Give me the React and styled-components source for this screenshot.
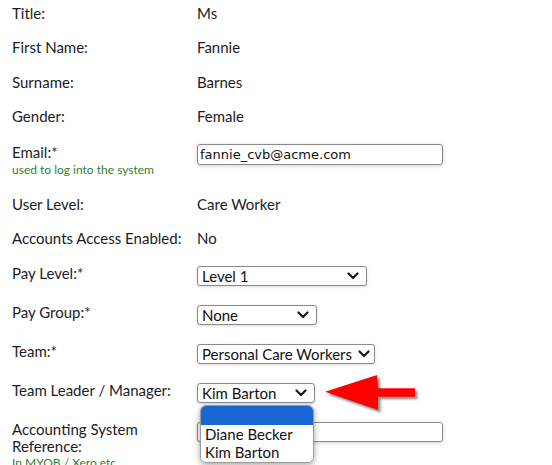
import React from "react";
import styled, { createGlobalStyle } from "styled-components";

const Global = createGlobalStyle`
  html, body { margin: 0; padding: 0; background: #fff; }
  body { font-family: Lato, "Open Sans", sans-serif; color: #1c1c24; }
`;

const Form = styled.div`
  display: flex;
  flex-direction: column;
  padding: 4.5px 0 0 12px;
  width: 540px;
  height: 460.5px;
  overflow: hidden;
`;

const Row = styled.div`
  display: grid;
  grid-template-columns: 185px 1fr;
  align-items: start;
  height: ${(p) => p.$h}px;
  flex-shrink: 0;
`;

const Label = styled.div`
  font-size: 15px;
  line-height: 17px;
`;

const Hint = styled.div`
  font-size: 12px;
  line-height: 14px;
  color: #2f7f2f;
  margin-top: ${(p) => p.$mt || 0}px;
`;

const Value = styled.div`
  font-size: 15px;
  line-height: 17px;
`;

const TextInput = styled.div`
  box-sizing: border-box;
  width: 246px;
  height: ${(p) => p.$h || 21}px;
  margin-top: ${(p) => p.$mt || 0}px;
  border: 1px solid #8a8a8a;
  border-radius: 3px;
  background: #fff;
  box-shadow: 0 1px 4px rgba(0, 0, 0, 0.18);
  font-family: "DejaVu Sans", Verdana, sans-serif;
  font-size: 13px;
  line-height: 19px;
  padding-left: 2px;
  color: #111;
`;

const SelectWrap = styled.div`
  position: relative;
  width: ${(p) => p.$w}px;
  margin-top: 1px;
`;

const SelectBox = styled.div`
  box-sizing: border-box;
  width: 100%;
  height: 20px;
  border: 1px solid #8a8a8a;
  border-radius: 3px;
  background: #fff;
  box-shadow: 0 1px 3px rgba(0, 0, 0, 0.15);
  display: flex;
  align-items: center;
  justify-content: space-between;
  padding: 0 7px 0 4px;
  font-size: 15px;
  line-height: 18px;
  color: #111;
  white-space: nowrap;
`;

const Chevron = styled.svg`
  width: 12px;
  height: 8px;
  flex-shrink: 0;
  margin-left: 6px;
`;

const Popup = styled.div`
  position: absolute;
  left: 3px;
  top: 22px;
  width: 114px;
  box-sizing: border-box;
  border: 1px solid #9a9a9a;
  border-radius: 6px;
  background: #fff;
  box-shadow: 0 2px 6px rgba(0, 0, 0, 0.35);
  overflow: hidden;
  z-index: 5;
`;

const Option = styled.div`
  height: ${(p) => (p.$selected ? 19 : 18.5)}px;
  line-height: 18px;
  padding-left: 4px;
  font-size: 15px;
  color: #111;
  background: ${(p) => (p.$selected ? "#1a66d2" : "#fff")};
`;

const ArrowSvg = styled.svg`
  position: absolute;
  left: calc(100% + 5px);
  top: -13px;
  width: 105px;
  height: 48px;
  overflow: visible;
`;

const Select = ({ w, children, popup, arrow }) => (
  <SelectWrap $w={w}>
    <SelectBox>
      <span>{children}</span>
      <Chevron viewBox="0 0 12 8">
        <path d="M1.5 1.5 L6 6 L10.5 1.5" fill="none" stroke="#1a1a1a" strokeWidth="2.2" strokeLinecap="round" strokeLinejoin="round" />
      </Chevron>
    </SelectBox>
    {popup}
    {arrow}
  </SelectWrap>
);

const Arrow = () => (
  <ArrowSvg viewBox="0 0 105 48">
    <defs>
      <filter id="sh" x="-20%" y="-20%" width="150%" height="160%">
        <feGaussianBlur stdDeviation="1.3" />
      </filter>
    </defs>
    <polygon
      points="5,21.7 57,5 58,18.3 95,18.3 95,26.7 58,26.7 58,40"
      fill="#8c8c8c"
      transform="translate(2.5,2.5)"
      filter="url(#sh)"
    />
    <polygon points="5,21.7 57,5 58,18.3 95,18.3 95,26.7 58,26.7 58,40" fill="#ff0000" />
  </ArrowSvg>
);

export default function App() {
  return (
    <>
      <Global />
      <Form>
        <Row $h={34}>
          <Label>Title:</Label>
          <Value>Ms</Value>
        </Row>
        <Row $h={35}>
          <Label>First Name:</Label>
          <Value>Fannie</Value>
        </Row>
        <Row $h={34}>
          <Label>Surname:</Label>
          <Value>Barnes</Value>
        </Row>
        <Row $h={36.5}>
          <Label>Gender:</Label>
          <Value>Female</Value>
        </Row>
        <Row $h={51.5}>
          <div>
            <Label>Email:*</Label>
            <Hint $mt={2}>used to log into the system</Hint>
          </div>
          <TextInput>fannie_cvb@acme.com</TextInput>
        </Row>
        <Row $h={34}>
          <Label>User Level:</Label>
          <Value>Care Worker</Value>
        </Row>
        <Row $h={35}>
          <Label>Accounts Access Enabled:</Label>
          <Value>No</Value>
        </Row>
        <Row $h={39}>
          <Label>Pay Level:*</Label>
          <Select w={170}>Level 1</Select>
        </Row>
        <Row $h={39}>
          <Label>Pay Group:*</Label>
          <Select w={120}>None</Select>
        </Row>
        <Row $h={39}>
          <Label>Team:*</Label>
          <Select w={178}>Personal Care Workers</Select>
        </Row>
        <Row $h={39}>
          <Label>Team Leader / Manager:</Label>
          <Select
            w={118}
            arrow={<Arrow />}
            popup={
              <Popup>
                <Option $selected>&nbsp;</Option>
                <Option>Diane Becker</Option>
                <Option>Kim Barton</Option>
              </Popup>
            }
          >
            Kim Barton
          </Select>
        </Row>
        <Row $h={60}>
          <div>
            <Label>
              Accounting System
              <br />
              Reference:
            </Label>
            <Hint $mt={1}>In MYOB / Xero etc</Hint>
          </div>
          <TextInput $h={20} $mt={1} />
        </Row>
      </Form>
    </>
  );
}
